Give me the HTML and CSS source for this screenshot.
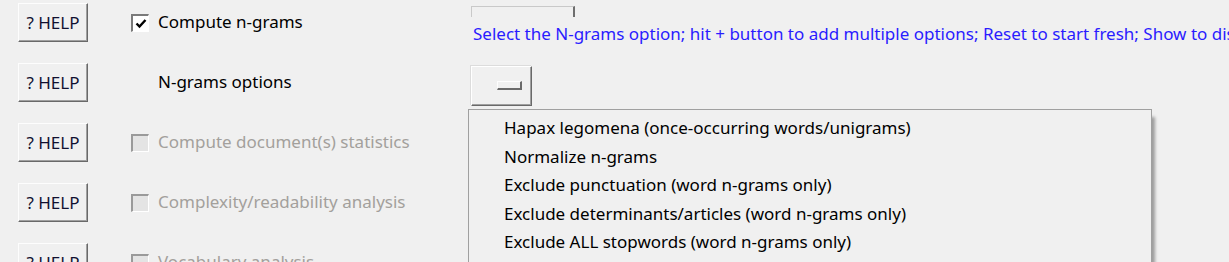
FILE: index.html
```html
<!DOCTYPE html>
<html>
<head>
<meta charset="utf-8">
<link rel="stylesheet" href="styles.css">
</head>
<body>
<div class="window">
  <div class="left">
    <div class="row">
      <div class="help">? HELP</div>
      <div class="check checked"><svg width="12" height="11" viewBox="0 0 12 11"><polyline points="1.5,5.5 4.5,8.5 10.5,2" fill="none" stroke="#000" stroke-width="2.4"/></svg></div>
      <span class="label">Compute n-grams</span>
    </div>
    <div class="row">
      <div class="help">? HELP</div>
      <div class="nocheck"></div>
      <span class="label">N-grams options</span>
    </div>
    <div class="row">
      <div class="help">? HELP</div>
      <div class="check disabled"></div>
      <span class="label dim">Compute document(s) statistics</span>
    </div>
    <div class="row">
      <div class="help">? HELP</div>
      <div class="check disabled"></div>
      <span class="label dim">Complexity/readability analysis</span>
    </div>
    <div class="row">
      <div class="help">? HELP</div>
      <div class="check disabled"></div>
      <span class="label dim">Vocabulary analysis</span>
    </div>
  </div>
  <div class="right">
    <div class="stub"></div>
    <div class="hint">Select the N-grams option; hit + button to add multiple options; Reset to start fresh; Show to display all selected options</div>
    <div class="menubtn"><div class="indicator"></div></div>
    <div class="menu">
      <div class="item">Hapax legomena (once-occurring words/unigrams)</div>
      <div class="item">Normalize n-grams</div>
      <div class="item">Exclude punctuation (word n-grams only)</div>
      <div class="item">Exclude determinants/articles (word n-grams only)</div>
      <div class="item">Exclude ALL stopwords (word n-grams only)</div>
      <div class="item">Lemmatize</div>
    </div>
  </div>
</div>
</body>
</html>
```
FILE: styles.css
```css
html, body {
  margin: 0;
  padding: 0;
  background: #f0f0f0;
  overflow: hidden;
}
body {
  width: 1229px;
  height: 262px;
  font-family: "Noto Sans", "Open Sans", sans-serif;
  font-size: 17px;
  color: #000;
}
.window {
  display: flex;
  height: 262px;
  overflow: hidden;
}
.left {
  width: 471px;
  box-sizing: border-box;
  padding: 3px 0 0 18px;
  display: flex;
  flex-direction: column;
  gap: 21px;
  flex-shrink: 0;
}
.row {
  display: flex;
  align-items: center;
  height: 39px;
  flex-shrink: 0;
}
.help {
  width: 70px;
  height: 39px;
  box-sizing: border-box;
  border-top: 1px solid #fdfdfd;
  border-left: 1px solid #fdfdfd;
  border-right: 1px solid #696969;
  border-bottom: 1px solid #696969;
  box-shadow: inset -1px -1px 0 #a0a0a0;
  display: flex;
  align-items: center;
  justify-content: center;
  padding-bottom: 1px;
  color: #101030;
  white-space: nowrap;
  flex-shrink: 0;
}
.check {
  width: 18px;
  height: 18px;
  box-sizing: border-box;
  margin-left: 43px;
  margin-right: 9px;
  border-top: 2px solid #8a8a8a;
  border-left: 2px solid #8a8a8a;
  border-right: 1px solid #ffffff;
  border-bottom: 1px solid #ffffff;
  display: flex;
  align-items: center;
  justify-content: center;
  flex-shrink: 0;
}
.check.checked {
  background: #fff;
  border-top-color: #7a7a7a;
  border-left-color: #7a7a7a;
}
.check.disabled {
  background: #e4e4e4;
  border-top-color: #9a9a9a;
  border-left-color: #9a9a9a;
}
.nocheck {
  width: 18px;
  margin-left: 43px;
  margin-right: 9px;
  flex-shrink: 0;
}
.label {
  white-space: nowrap;
  padding-bottom: 3px;
}
.label.dim {
  color: #a3a09c;
}
.right {
  position: relative;
  flex: 1;
  display: flex;
  flex-direction: column;
  align-items: flex-start;
  min-width: 0;
}
.stub {
  margin-top: 6px;
  width: 104px;
  height: 11px;
  box-sizing: border-box;
  border-top: 1px solid #c9c9c9;
  border-left: 1px solid #c9c9c9;
  border-right: 2px solid #6e6e6e;
  flex-shrink: 0;
}
.hint {
  margin-top: 5px;
  margin-left: 2px;
  color: #2a1cff;
  white-space: nowrap;
  line-height: 24px;
}
.menubtn {
  margin-top: 20px;
  width: 61px;
  height: 40px;
  box-sizing: border-box;
  border-top: 1px solid #ffffff;
  border-left: 1px solid #ffffff;
  border-right: 1px solid #696969;
  border-bottom: 1px solid #696969;
  box-shadow: inset -1px -1px 0 #a0a0a0, -1px -1px 0 #dcdcdc;
  display: flex;
  align-items: flex-start;
  justify-content: flex-end;
  padding: 14px 9px 0 0;
  flex-shrink: 0;
}
.indicator {
  width: 25px;
  height: 9px;
  box-sizing: border-box;
  border-top: 1px solid #fdfdfd;
  border-left: 1px solid #fdfdfd;
  border-right: 2px solid #6a6a6a;
  border-bottom: 2px solid #6a6a6a;
  background: #f0f0f0;
}
.menu {
  position: absolute;
  left: -3px;
  top: 109px;
  width: 684px;
  box-sizing: border-box;
  border: 1px solid #a0a0a0;
  background: #f0f0f0;
  padding: 4px 0 0 35px;
  box-shadow: 4px 7px 3px -1px rgba(0, 0, 0, 0.35);
}
.item {
  height: 28.5px;
  line-height: 28.5px;
  white-space: nowrap;
}
```
